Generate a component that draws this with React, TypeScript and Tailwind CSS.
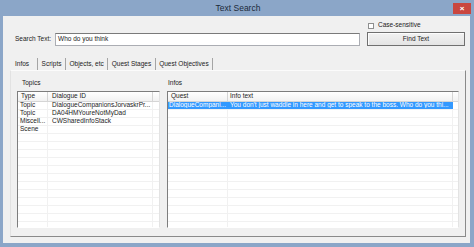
const topics = [
  { type: 'Topic', id: 'DialogueCompanionsJorvaskrPr...' },
  { type: 'Topic', id: 'DA04HMYoureNotMyDad' },
  { type: 'Miscell...', id: 'CWSharedInfoStack' },
  { type: 'Scene', id: '' },
]

const tabs = ['Scripts', 'Objects, etc', 'Quest Stages', 'Quest Objectives']

function EmptyRows({ count, cols }: { count: number; cols: number[] }) {
  return (
    <>
      {Array.from({ length: count }).map((_, i) => (
        <div key={i} className="flex h-[8px] shrink-0 border-b border-[#f1f1f1]">
          {cols.map((w, j) => (
            <div key={j} className="h-full shrink-0 border-r border-[#f1f1f1]" style={{ width: w }} />
          ))}
        </div>
      ))}
    </>
  )
}

export default function App() {
  return (
    <div className="flex h-[247px] w-[474px] flex-col overflow-hidden bg-[#8ba6c8] font-['Liberation_Sans',Arial,sans-serif] text-[6.5px] leading-none text-[#1a1a1a]">
      {/* title bar */}
      <div className="relative flex h-[16px] shrink-0 items-center justify-center">
        <span className="pl-[2px] text-[8.5px] text-[#1c2a3a]">Text Search</span>
        <div className="absolute right-[3px] top-[3px] flex h-[11px] w-[18px] items-center justify-center bg-[#c9463f] text-[8px] font-bold text-white">
          ×
        </div>
      </div>

      {/* body */}
      <div className="mb-[4px] ml-[3px] mr-[4px] flex flex-1 flex-col bg-[#f0f0f0]">
        <div className="mt-[6px] flex h-[7px] items-center pl-[365px]">
          <div className="h-[6px] w-[6px] border border-[#8e8f8f] bg-white" />
          <span className="ml-[4px]">Case-sensitive</span>
        </div>

        <div className="mt-[3px] flex h-[14px] items-center">
          <span className="ml-[12px] w-[40px]">Search Text:</span>
          <div className="flex h-[13px] w-[305px] items-center border border-[#abadb3] border-t-[#7a7a7a] bg-white pl-[2px]">
            Who do you think
          </div>
          <div className="ml-[7px] flex h-[14px] w-[98px] items-center justify-center border border-[#707070] bg-[linear-gradient(#f2f2f2,#e4e4e4)] shadow-[inset_1px_1px_0_#fdfdfd]">
            Find Text
          </div>
        </div>

        {/* tabs */}
        <div className="mt-[12px] flex h-[12px] items-stretch pl-[9px]">
          <div className="flex items-center border-r border-[#a5a5a5] pl-[3px] pr-[8px]">Infos</div>
          {tabs.map((t) => (
            <div key={t} className="flex items-center border-r border-[#a5a5a5] px-[3.5px]">
              {t}
            </div>
          ))}
        </div>

        {/* panel */}
        <div className="ml-[7px] flex h-[167px] w-[456px] flex-col border border-b-[#8a8a8a] border-l-[#e2e2e2] border-r-[#8a8a8a] border-t-[#fbfbfb] bg-[#f0f0f0]">
          <div className="mt-[9px] flex">
            <div className="ml-[11px] w-[145px]">Topics</div>
            <div className="ml-[1px]">Infos</div>
          </div>

          <div className="mt-[4px] flex h-[137px] pl-[6px]">
            {/* topics list */}
            <div className="flex h-full w-[143px] flex-col overflow-hidden border border-b-[#ffffff] border-l-[#7d7d7d] border-r-[#e3e3e3] border-t-[#7d7d7d] bg-white">
              <div className="flex h-[10px] shrink-0 border-b border-[#d5d5d5] bg-[linear-gradient(#ffffff,#f2f2f2)]">
                <div className="flex w-[30px] items-center border-r border-[#d5d5d5] pl-[3px]">Type</div>
                <div className="flex w-[105px] items-center border-r border-[#d5d5d5] pl-[4px]">Dialogue ID</div>
              </div>
              {topics.map((r, i) => (
                <div key={i} className="flex h-[8px] shrink-0 items-center border-b border-[#f1f1f1]">
                  <div className="flex h-full w-[30px] items-center border-r border-[#f1f1f1] pl-[2px]">{r.type}</div>
                  <div className="flex h-full w-[105px] items-center border-r border-[#f1f1f1] pl-[4px]">{r.id}</div>
                </div>
              ))}
              <EmptyRows count={14} cols={[30, 105]} />
            </div>

            {/* infos list */}
            <div className="ml-[7px] flex h-full w-[292px] flex-col overflow-hidden border border-b-[#ffffff] border-l-[#7d7d7d] border-r-[#e3e3e3] border-t-[#7d7d7d] bg-white">
              <div className="flex h-[10px] shrink-0 border-b border-[#d5d5d5] bg-[linear-gradient(#ffffff,#f2f2f2)]">
                <div className="flex w-[60px] items-center border-r border-[#d5d5d5] pl-[3px]">Quest</div>
                <div className="flex w-[225px] items-center border-r border-[#d5d5d5] pl-[2px]">Info text</div>
              </div>
              <div className="flex h-[8px] shrink-0 border-b border-[#f1f1f1]">
                <div className="flex h-full w-[285px] items-center bg-[#3399ff] text-white">
                  <div className="w-[60px] overflow-hidden whitespace-nowrap pl-[1px]">DialogueCompani...</div>
                  <div className="w-[225px] overflow-hidden whitespace-nowrap pl-[2px]">
                    You don't just waddle in here and get to speak to the boss. Who do you thi...
                  </div>
                </div>
              </div>
              <EmptyRows count={17} cols={[60, 225]} />
            </div>
          </div>
        </div>
      </div>
    </div>
  )
}
